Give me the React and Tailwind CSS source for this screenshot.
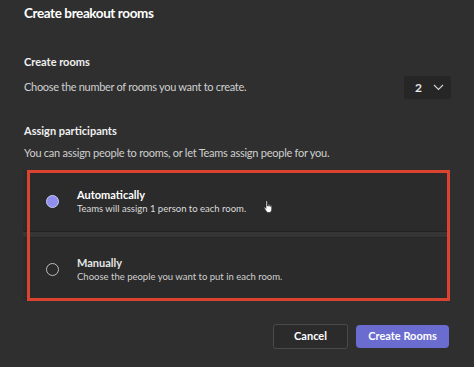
import React from "react";

function HandCursor() {
  return (
    <svg width="11" height="14" viewBox="0 0 11 14" className="absolute left-[240px] top-[29px]">
      <path
        d="M3 1.2c0-.7 1.3-.7 1.3 0V6h.3V4.8c0-.6 1.2-.6 1.2 0V6.2h.3V5.3c0-.6 1.2-.6 1.2 0v1.2h.3v-.6c0-.6 1.1-.6 1.1 0v3.4c0 1.6-.9 3.2-2.4 3.2H5.3c-1 0-1.6-.6-2.2-1.5L1.2 8.1c-.4-.6.4-1.2.9-.7L3 8.4V1.2z"
        fill="#ffffff"
        stroke="#222"
        strokeWidth="0.6"
      />
    </svg>
  );
}

export default function App() {
  return (
    <div
      className="w-[474px] h-[367px] bg-[#2f2f2f] overflow-hidden relative"
      style={{ fontFamily: 'Lato, "Open Sans", sans-serif' }}
    >
      <div className="pl-6 pr-[23px]">
        <div className="text-[13.5px] leading-[26px] font-bold tracking-[-0.4px] text-white">Create breakout rooms</div>

        <div className="mt-[26px] text-[11px] leading-[20px] font-bold text-[#f0f0f0]">Create rooms</div>
        <div className="mt-[4px] flex items-center justify-between h-[23px]">
          <div className="text-[11px] tracking-[-0.3px] text-[#cfcfcf]">Choose the number of rooms you want to create.</div>
          <div className="w-[47px] h-[23px] bg-[#262626] rounded-[3px] flex items-center pl-[11px] pr-[7px] justify-between">
            <span className="text-[12px] font-bold text-[#e8e8e8]">2</span>
            <svg width="11" height="7" viewBox="0 0 11 7">
              <path d="M1 1l4.5 4.5L10 1" fill="none" stroke="#cfcfcf" strokeWidth="1.2" />
            </svg>
          </div>
        </div>

        <div className="mt-[22px] text-[11px] leading-[20px] font-bold text-[#f0f0f0]">Assign participants</div>
        <div className="mt-[2px] text-[11px] leading-[20px] tracking-[-0.25px] text-[#cfcfcf]">
          You can assign people to rooms, or let Teams assign people for you.
        </div>
      </div>

      <div className="relative ml-[23px] w-[425px] mt-[8px]">
        <div className="flex flex-col">
          <div className="h-[61px] bg-[#2b2b2b] border-b border-[#222] flex items-center relative">
            <div className="w-[58px] flex justify-center">
              <span className="w-[13px] h-[13px] rounded-full bg-[#8f90ee] border-[1.5px] border-[#c9caf7] block" />
            </div>
            <div className="-ml-[4px]">
              <div className="text-[11px] leading-[14px] font-bold text-white">Automatically</div>
              <div className="text-[9.5px] leading-[13px] text-[#dcdcdc]">Teams will assign 1 person to each room.</div>
            </div>
            <HandCursor />
          </div>
          <div className="h-[5px] bg-[#353535]" />
          <div className="h-[63px] bg-[#2b2b2b] border-t border-[#262626] flex items-center">
            <div className="w-[58px] flex justify-center">
              <span className="w-[13px] h-[13px] rounded-full border-[1.5px] border-[#bdbdbd] block" />
            </div>
            <div className="-ml-[4px]">
              <div className="text-[11px] leading-[14px] font-bold text-[#e6e6e6]">Manually</div>
              <div className="text-[9.5px] leading-[13px] text-[#cfcfcf]">Choose the people you want to put in each room.</div>
            </div>
          </div>
        </div>
        <div className="absolute left-[4px] top-[-1px] w-[423px] h-[131px] border-[3px] border-[#d9432f] pointer-events-none" />
      </div>

      <div className="flex justify-end items-center gap-2 pr-[25px] mt-[24px]">
        <div className="w-[75px] h-[25px] border border-[#4a4a4a] bg-[#2b2b2b] rounded-[3px] flex items-center justify-center text-[11px] font-bold text-white">
          Cancel
        </div>
        <div className="w-[93px] h-[23px] bg-[#6a6cd0] rounded-[4px] flex items-center justify-center text-[11px] font-bold text-white">
          Create Rooms
        </div>
      </div>
    </div>
  );
}
